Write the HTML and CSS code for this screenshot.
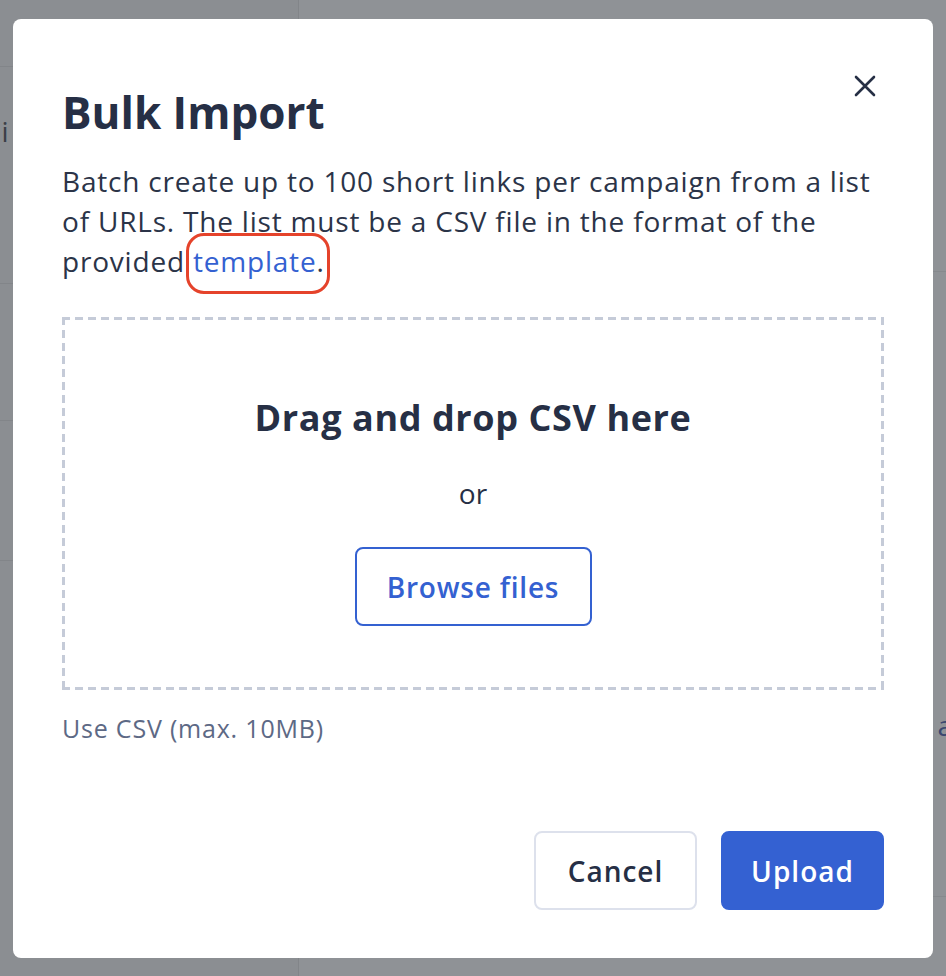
FILE: index.html
```html
<!DOCTYPE html>
<html lang="en">
<head>
<meta charset="utf-8">
<title>Bulk Import</title>
<link rel="stylesheet" href="styles.css">
</head>
<body>
<div class="page">
  <aside class="side">
    <div class="srow r1"></div>
    <div class="srow r2"><span class="ghost">ai</span></div>
    <div class="srow r3"></div>
    <div class="srow r4"></div>
  </aside>
  <main class="main">
    <div class="mrow m1"></div>
    <div class="mrow m2"><span class="ghost2">a</span></div>
  </main>
</div>

<div class="modal" role="dialog">
  <button class="close" aria-label="Close">
    <svg width="22" height="22" viewBox="0 0 22 22"><path d="M2 2L20 20M20 2L2 20" stroke="#262f45" stroke-width="2.6" stroke-linecap="round"/></svg>
  </button>
  <h1 class="title">Bulk Import</h1>
  <p class="desc">Batch create up to 100 short links per campaign from a list of URLs. The list must be a CSV file in the format of the provided <span class="mark"><a class="link" href="#">template</a>.</span></p>
  <div class="drop">
    <div class="drop-title">Drag and drop CSV here</div>
    <div class="or">or</div>
    <button class="browse">Browse files</button>
  </div>
  <div class="hint">Use CSV (max. 10MB)</div>
  <div class="footer">
    <button class="btn cancel">Cancel</button>
    <button class="btn upload">Upload</button>
  </div>
</div>
</body>
</html>
```

FILE: styles.css
```css
* { box-sizing: border-box; }
html, body { margin: 0; padding: 0; }
body {
  width: 946px;
  height: 976px;
  overflow: hidden;
  background: #8f9296;
  font-family: "Open Sans", Lato, Arial, sans-serif;
  position: relative;
}
.page {
  display: flex;
  height: 976px;
}
.side {
  width: 299px;
  background: #8b8e92;
  border-right: 1px solid #828589;
  display: flex;
  flex-direction: column;
}
.srow { border-bottom: 1px solid #828589; }
.r1 { height: 67px; }
.r2 { height: 217px; padding-top: 44px; }
.r3 { height: 137px; }
.r4 { height: 140px; }
.ghost {
  display: block;
  margin-left: -14px;
  font-size: 28px;
  line-height: 40px;
  color: #3b3f47;
}
.main { flex: 1; display: flex; flex-direction: column; }
.mrow { border-bottom: 1px solid #86898d; }
.m1 { height: 272px; }
.m2 { height: 625px; padding-top: 433px; text-align: right; }
.ghost2 {
  display: inline-block;
  margin-right: -7px;
  font-size: 28px;
  line-height: 40px;
  color: #3b4770;
}

.modal {
  position: absolute;
  left: 13px;
  top: 19px;
  width: 920px;
  height: 939px;
  background: #fff;
  border-radius: 8px;
  padding: 0 49px 48px;
  display: flex;
  flex-direction: column;
}
.close {
  position: absolute;
  right: 57px;
  top: 56px;
  width: 22px;
  height: 22px;
  padding: 0;
  border: 0;
  background: none;
  display: flex;
}
.title {
  margin: 65px 0 0;
  font-size: 44px;
  line-height: 56px;
  font-weight: 700;
  color: #262f45;
}
.desc {
  margin: 21px 0 0;
  font-size: 28px;
  line-height: 40px;
  letter-spacing: 0.8px;
  color: #2b3448;
}
.mark { position: relative; }
.mark::after {
  content: "";
  position: absolute;
  left: -7px;
  right: -5px;
  top: -9px;
  bottom: -14px;
  border: 3px solid #e5432b;
  border-radius: 18px;
}
.link { color: #3461d1; text-decoration: none; }
.drop {
  margin-top: 36px;
  height: 373px;
  padding-top: 80px;
  display: flex;
  flex-direction: column;
  align-items: center;
  background:
    repeating-linear-gradient(to right, #c5cbd8 0 8px, transparent 8px 13px) left top / 100% 3px no-repeat,
    repeating-linear-gradient(to right, #c5cbd8 0 8px, transparent 8px 13px) left bottom / 100% 3px no-repeat,
    repeating-linear-gradient(to bottom, #c5cbd8 0 8px, transparent 8px 13px) left top / 3px 100% no-repeat,
    repeating-linear-gradient(to bottom, #c5cbd8 0 8px, transparent 8px 13px) right top / 3px 100% no-repeat;
}
.drop-title {
  font-size: 36px;
  line-height: 42px;
  font-weight: 700;
  letter-spacing: 0.6px;
  color: #262f45;
}
.or {
  margin-top: 34px;
  font-size: 28px;
  line-height: 40px;
  color: #262f45;
}
.browse {
  margin-top: 34px;
  width: 237px;
  height: 79px;
  border: 2px solid #3461d1;
  border-radius: 8px;
  background: #fff;
  color: #3461d1;
  font-family: inherit;
  font-size: 28px;
  font-weight: 600;
  letter-spacing: 0.8px;
  padding: 0;
}
.hint {
  margin-top: 22px;
  font-size: 25px;
  line-height: 32px;
  letter-spacing: 0.8px;
  color: #5d6985;
}
.footer {
  margin-top: auto;
  display: flex;
  justify-content: flex-end;
  gap: 24px;
}
.btn {
  width: 163px;
  height: 79px;
  border-radius: 8px;
  font-family: inherit;
  font-size: 28px;
  font-weight: 600;
  letter-spacing: 1px;
  padding: 0;
}
.cancel {
  background: #fff;
  border: 2px solid #dde1ec;
  color: #262f45;
}
.upload {
  background: #3461d2;
  border: 2px solid #3461d2;
  color: #fff;
}
```
